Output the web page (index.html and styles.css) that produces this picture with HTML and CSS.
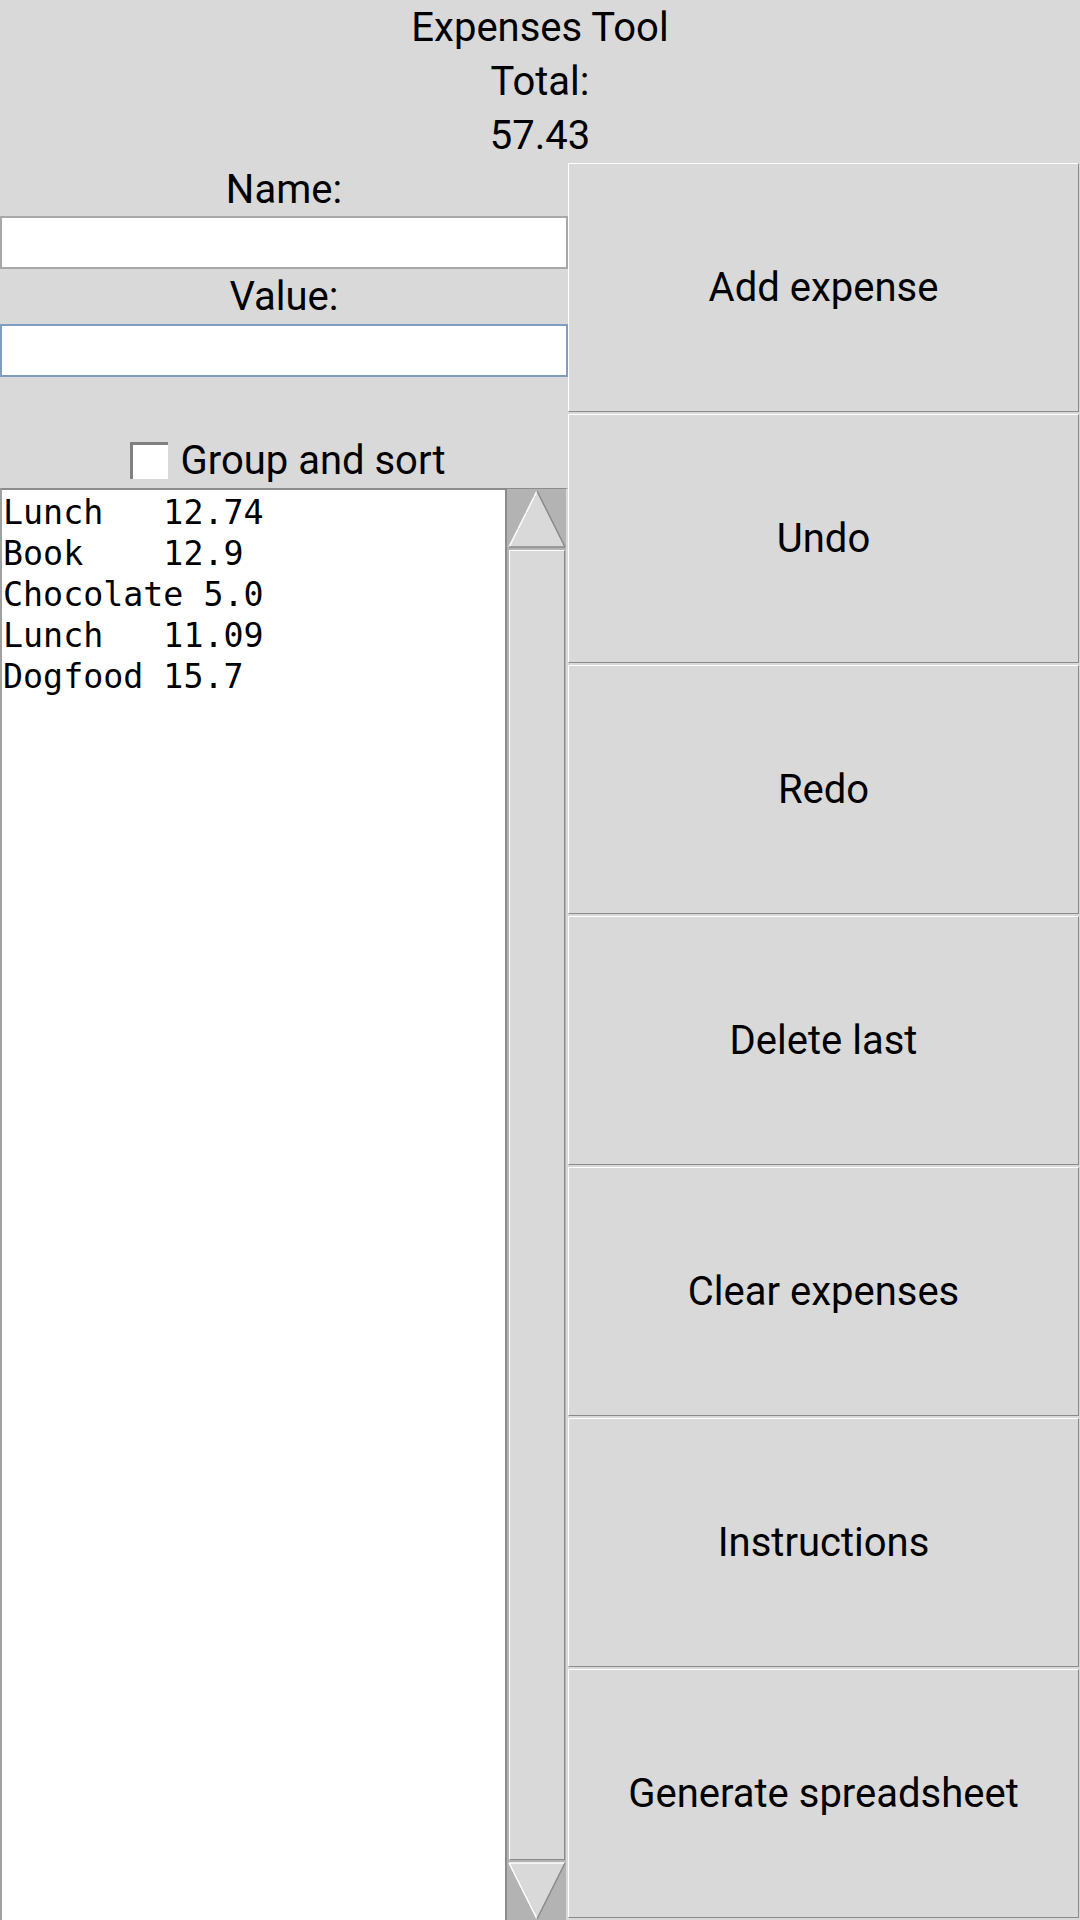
FILE: index.html
```html
<!DOCTYPE html>
<html lang="en">
<head>
    <meta charset="UTF-8">
    <meta name="viewport" content="width=device-width, initial-scale=1.0">
    <title>Expenses Tool</title>
    <link rel="stylesheet" href="styles.css">
</head>
<body>
    <div class="app">
        <div class="header">
            <div class="head-row">Expenses Tool</div>
            <div class="head-row">Total:</div>
            <div class="head-row total">57.43</div>
        </div>
        <div class="main">
            <div class="left">
                <div class="field-label">Name:</div>
                <input class="entry" type="text">
                <div class="field-label value-label">Value:</div>
                <input class="entry focused" type="text">
                <div class="spacer"></div>
                <label class="check-row">
                    <span class="checkbox"></span>
                    <span>Group and sort</span>
                </label>
                <div class="list-wrap">
                    <div class="listbox">
                        <div class="list-item">Lunch   12.74</div>
                        <div class="list-item">Book    12.9</div>
                        <div class="list-item">Chocolate 5.0</div>
                        <div class="list-item">Lunch   11.09</div>
                        <div class="list-item">Dogfood 15.7</div>
                    </div>
                    <div class="scrollbar">
                        <svg class="arrow" width="58" height="59" viewBox="0 0 58 59">
                            <polygon points="29,1 1,57 57,57" fill="#d9d9d9"/>
                            <line x1="29" y1="1" x2="1" y2="57" stroke="#ffffff" stroke-width="1.5"/>
                            <line x1="29" y1="1" x2="57" y2="57" stroke="#8a8a8a" stroke-width="1.5"/>
                            <line x1="1" y1="57" x2="57" y2="57" stroke="#8a8a8a" stroke-width="1.5"/>
                        </svg>
                        <div class="thumb"></div>
                        <svg class="arrow" width="58" height="59" viewBox="0 0 58 59">
                            <polygon points="1,2 57,2 29,58" fill="#d9d9d9"/>
                            <line x1="1" y1="2" x2="57" y2="2" stroke="#ffffff" stroke-width="1.5"/>
                            <line x1="1" y1="2" x2="29" y2="58" stroke="#ffffff" stroke-width="1.5"/>
                            <line x1="57" y1="2" x2="29" y2="58" stroke="#8a8a8a" stroke-width="1.5"/>
                        </svg>
                    </div>
                </div>
            </div>
            <div class="buttons">
                <button>Add expense</button>
                <button>Undo</button>
                <button>Redo</button>
                <button>Delete last</button>
                <button>Clear expenses</button>
                <button>Instructions</button>
                <button>Generate spreadsheet</button>
            </div>
        </div>
    </div>
</body>
</html>
```

FILE: styles.css
```css
body {
    margin: 0;
    padding: 0;
    background: #d9d9d9;
    font-family: Roboto, "Noto Sans", sans-serif;
    font-size: 40px;
    color: #000;
    overflow: hidden;
}
.app {
    width: 1080px;
    height: 1920px;
    display: flex;
    flex-direction: column;
}
.header {
    display: grid;
    grid-template-rows: 54px 54px 55px;
}
.head-row {
    display: flex;
    align-items: center;
    justify-content: center;
}
.main {
    flex: 1;
    display: grid;
    grid-template-columns: 568px 1fr;
    min-height: 0;
}
.left {
    display: flex;
    flex-direction: column;
    min-height: 0;
}
.field-label {
    height: 53px;
    display: flex;
    align-items: center;
    justify-content: center;
}
.value-label {
    height: 55px;
}
.entry {
    box-sizing: border-box;
    width: 100%;
    height: 53px;
    margin: 0;
    padding: 0 6px;
    border: 2px solid #a8a8a8;
    background: #fff;
    font-family: Roboto, sans-serif;
    font-size: 40px;
    outline: none;
}
.entry.focused {
    border-color: #7e9dbf;
}
.spacer {
    height: 56px;
}
.check-row {
    height: 55px;
    display: flex;
    align-items: center;
    justify-content: center;
    gap: 12px;
    padding-left: 8px;
}
.checkbox {
    box-sizing: border-box;
    width: 38px;
    height: 37px;
    background: #fff;
    border-top: 3px solid #808080;
    border-left: 3px solid #808080;
}
.list-wrap {
    flex: 1;
    display: flex;
    min-height: 0;
}
.listbox {
    flex: 1;
    background: #fff;
    border-top: 2px solid #8c8c8c;
    border-left: 2px solid #a0a0a0;
    border-right: 1px solid #8c8c8c;
    padding: 2px 0 0 1px;
    font-family: "DejaVu Sans Mono", "Liberation Mono", monospace;
    font-size: 33.3px;
    line-height: 41px;
}
.list-item {
    white-space: pre;
}
.scrollbar {
    box-sizing: border-box;
    width: 62px;
    background: #b3b3b3;
    border-top: 1px solid #8c8c8c;
    border-left: 1px solid #8c8c8c;
    border-right: 2px solid #d9d9d9;
    padding: 1px 0 0 1px;
    display: flex;
    flex-direction: column;
}
.arrow {
    display: block;
}
.thumb {
    flex: 1;
    margin: 1px;
    background: #d9d9d9;
    border-top: 1px solid #fff;
    border-left: 1px solid #fff;
    border-right: 1px solid #8a8a8a;
    border-bottom: 1px solid #8a8a8a;
}
.buttons {
    display: grid;
    grid-template-rows: repeat(7, 1fr);
}
button {
    margin: 0 1px 2px 0;
    background: #d9d9d9;
    border-top: 1px solid #fff;
    border-left: 1px solid #fff;
    border-right: 1px solid #8a8a8a;
    border-bottom: 1px solid #8a8a8a;
    font-family: Roboto, sans-serif;
    font-size: 40px;
    color: #000;
    padding: 0;
    cursor: pointer;
}
```
